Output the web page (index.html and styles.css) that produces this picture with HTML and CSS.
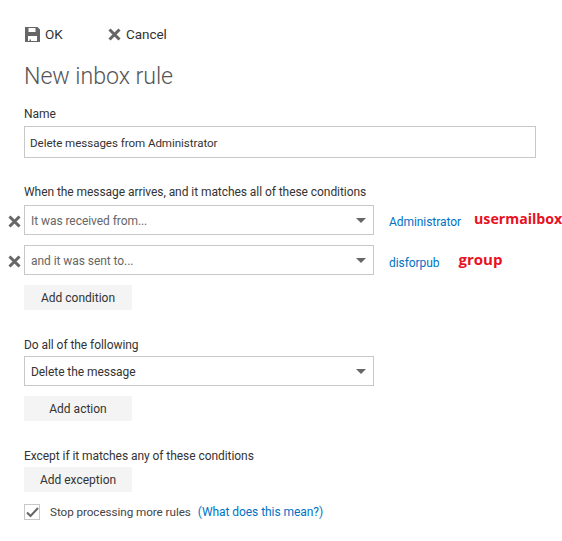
FILE: index.html
```html
<!DOCTYPE html>
<html lang="en">
<head>
    <meta charset="UTF-8">
    <title>New inbox rule</title>
    <link rel="stylesheet" href="styles.css">
</head>
<body>
    <div class="toolbar">
        <span class="tool tool-ok">
            <svg class="tool-icon" width="15" height="15" viewBox="0 0 15 15"><path fill="#666" fill-rule="evenodd" d="M0 0h12.500L15 2.500V15H0zM3.500 1v4h7V1zM3 9v5h9V9z"/><path fill="#666" d="M4.500 12.500h1.500V14H4.500z"/></svg>
            OK
        </span>
        <span class="tool">
            <svg class="tool-icon" width="13" height="13" viewBox="0 0 13 13"><path class="x-mark" d="M1.500 1.500l10 10M11.500 1.500l-10 10"/></svg>
            Cancel
        </span>
    </div>

    <h1 class="title">New inbox rule</h1>

    <div class="label label-name">Name</div>
    <div class="field">Delete messages from Administrator</div>

    <div class="label label-when">When the message arrives, and it matches all of these conditions</div>
    <div class="cond-row">
        <svg class="remove" width="13" height="13" viewBox="0 0 13 13"><path class="x-mark" d="M1.500 1.500l10 10M11.500 1.500l-10 10"/></svg>
        <div class="select muted"><span>It was received from...</span><i class="arrow"></i></div>
        <a class="value value-first">Administrator</a>
        <span class="note note-first">usermailbox</span>
    </div>
    <div class="cond-row cond-row-next">
        <svg class="remove" width="13" height="13" viewBox="0 0 13 13"><path class="x-mark" d="M1.500 1.500l10 10M11.500 1.500l-10 10"/></svg>
        <div class="select muted"><span>and it was sent to...</span><i class="arrow"></i></div>
        <a class="value value-second">disforpub</a>
        <span class="note note-second">group</span>
    </div>
    <button class="add add-first">Add condition</button>

    <div class="label label-do">Do all of the following</div>
    <div class="select"><span>Delete the message</span><i class="arrow"></i></div>
    <button class="add add-action">Add action</button>

    <div class="label label-except">Except if it matches any of these conditions</div>
    <button class="add add-exception">Add exception</button>

    <div class="stop-row">
        <span class="checkbox">
            <svg width="13" height="11" viewBox="0 0 13 11"><path d="M1 5.500l3.500 3.500L12 1" fill="none" stroke="#666" stroke-width="2"/></svg>
        </span>
        <span class="stop-text">Stop processing more rules</span>
        <a class="help">(What does this mean?)</a>
    </div>
</body>
</html>
```

FILE: styles.css
```css
body {
    margin: 0;
    padding: 0 24px;
    font-family: Roboto, "Open Sans", sans-serif;
    font-size: 12px;
    line-height: 16px;
    letter-spacing: -0.06px;
    color: #333;
    background: #fff;
}

.toolbar {
    display: flex;
    height: 20px;
    margin-left: 1px;
    padding-top: 24px;
    font-size: 13.500px;
    line-height: 20px;
}
.tool {
    display: flex;
    align-items: center;
    gap: 5px;
}
.tool-ok {
    width: 83px;
}
.tool-icon {
    flex: none;
}
.x-mark {
    fill: none;
    stroke: #666;
    stroke-width: 3;
}

.title {
    margin: 14px 0 0;
    font-size: 23.200px;
    font-weight: 300;
    line-height: 36px;
    color: #555;
}

.label {
    height: 16px;
}
.label-name {
    margin-top: 12px;
}
.label-when {
    margin-top: 26px;
}
.label-do {
    margin-top: 27px;
}
.label-except {
    margin-top: 27px;
}

.field {
    box-sizing: border-box;
    width: 512px;
    height: 32px;
    margin-top: 4px;
    padding: 1px 5px 0;
    border: 1px solid #c8c8c8;
    font-size: 11.600px;
    line-height: 30px;
}

.cond-row {
    display: flex;
    align-items: center;
    height: 30px;
    margin-top: 5px;
}
.cond-row-next {
    margin-top: 10px;
}
.remove {
    flex: none;
    margin-top: 2px;
    margin-left: -16px;
    margin-right: 3px;
}

.select {
    box-sizing: border-box;
    display: flex;
    flex: none;
    align-items: center;
    justify-content: space-between;
    width: 350px;
    height: 30px;
    padding: 1px 6px 0;
    border: 1px solid #c8c8c8;
}
.muted span {
    color: #666;
}
.arrow {
    width: 0;
    height: 0;
    margin-right: 1px;
    border-left: 5px solid transparent;
    border-right: 5px solid transparent;
    border-top: 5px solid #666;
}

.value {
    margin-left: 15px;
    color: #0072c6;
}
.value-first {
    padding-top: 4px;
}
.value-second {
    padding-top: 6px;
}
.note {
    font-family: "Open Sans", sans-serif;
    font-weight: 700;
    font-size: 14.200px;
    letter-spacing: 0;
    color: #e81123;
}
.note-first {
    margin-left: 13px;
    padding-bottom: 3px;
}
.note-second {
    margin-left: 19px;
    padding-bottom: 2px;
    font-size: 15px;
}

.add {
    display: block;
    width: 108px;
    height: 25px;
    padding: 2px 0 0;
    border: none;
    background: #f4f4f4;
    font: inherit;
    line-height: 23px;
    color: #333;
}
.add-first {
    margin-top: 10px;
}
.add-action {
    margin-top: 10px;
}
.add-exception {
    margin-top: 3px;
}

.label-do + .select {
    margin-top: 3px;
}

.stop-row {
    display: flex;
    align-items: center;
    margin-top: 12px;
    font-size: 11.700px;
}
.checkbox {
    box-sizing: border-box;
    display: flex;
    align-items: center;
    justify-content: center;
    width: 16px;
    height: 16px;
    border: 1px solid #c8c8c8;
}
.stop-text {
    margin-left: 10px;
    color: #444;
}
.help {
    margin-left: 7px;
    font-size: 12px;
    color: #0072c6;
}
```
